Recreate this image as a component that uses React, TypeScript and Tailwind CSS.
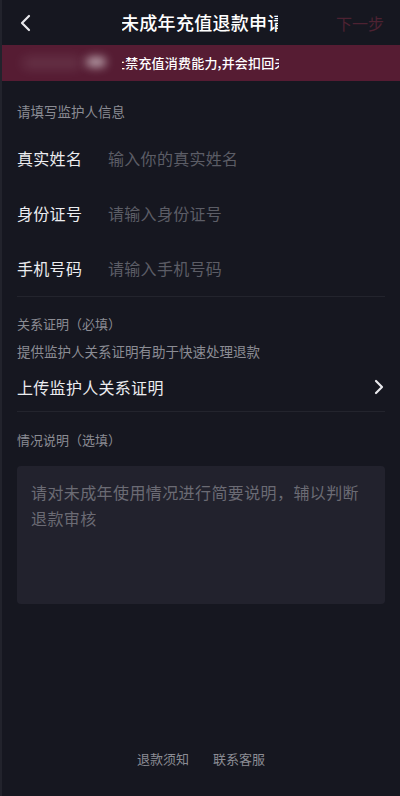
import React from "react";

const font = { fontFamily: '"Noto Sans CJK SC", "Noto Sans", sans-serif' };

function Row({ label, placeholder }: { label: string; placeholder: string }) {
  return (
    <div className="flex items-center h-[55px]">
      <span className="w-[91px] text-[16px] text-[#ecedf0] tracking-[0.3px]">{label}</span>
      <span className="text-[16px] text-[#5c5d66] tracking-[0.3px]">{placeholder}</span>
    </div>
  );
}

export default function App() {
  return (
    <div style={font} className="w-[400px] h-[796px] bg-[#161720] border-l-2 border-[#22232c] flex flex-col overflow-hidden">
      {/* header */}
      <div className="h-[45px] shrink-0 flex items-center relative">
        <div className="w-[120px] pl-[17px] flex items-center">
          <svg width="14" height="20" viewBox="0 0 14 20">
            <path d="M10 3 L3 10 L10 17" stroke="#e8e8ec" strokeWidth="2.2" fill="none" strokeLinecap="round" strokeLinejoin="round" />
          </svg>
        </div>
        <div className="w-[156px] overflow-hidden whitespace-nowrap">
          <span className="text-[18px] text-white font-medium block -ml-[1px] tracking-[0.3px]">未成年充值退款申请</span>
        </div>
        <div className="flex-1 flex justify-end pr-[16px]">
          <span className="text-[16px] text-[#4d2232]">下一步</span>
        </div>
      </div>
      {/* banner */}
      <div className="h-[36px] shrink-0 bg-[#561c33] flex items-center relative">
        <div className="absolute left-[84px] top-[12px] w-[20px] h-[10px] rounded-full bg-white/60 blur-[5px]" />
        <div className="absolute left-[20px] top-[12px] w-[60px] h-[12px] rounded-full bg-white/10 blur-[6px]" />
        <div className="ml-[120px] w-[157px] overflow-hidden whitespace-nowrap">
          <span className="block text-[13px] text-white font-medium -ml-[10px] tracking-[0.2px]">止禁充值消费能力,并会扣回未成年</span>
        </div>
      </div>
      {/* form */}
      <div className="px-[15px] flex flex-col">
        <div className="pt-[20px] text-[13.5px] text-[#8b8c94] h-[49px] leading-[20px]">请填写监护人信息</div>
        <Row label="真实姓名" placeholder="输入你的真实姓名" />
        <Row label="身份证号" placeholder="请输入身份证号" />
        <Row label="手机号码" placeholder="请输入手机号码" />
        <div className="h-px bg-[#23242d] mt-[1px]" />
        <div className="pt-[17px] text-[13px] text-[#8b8c94] leading-[20px]">关系证明（必填）</div>
        <div className="pt-[7px] text-[13.5px] text-[#8b8c94] leading-[20px]">提供监护人关系证明有助于快速处理退款</div>
        <div className="flex items-center justify-between h-[38px] mt-[7px]">
          <span className="text-[16px] text-[#ecedf0] tracking-[0.3px]">上传监护人关系证明</span>
          <svg width="12" height="18" viewBox="0 0 12 18">
            <path d="M3 3 L9 9 L3 15" stroke="#e8e8ec" strokeWidth="2.2" fill="none" strokeLinecap="round" strokeLinejoin="round" />
          </svg>
        </div>
        <div className="h-px bg-[#23242d] mt-[5px]" />
        <div className="pt-[18px] text-[13px] text-[#8b8c94] leading-[20px]">情况说明（选填）</div>
        <div className="mt-[16px] h-[138px] bg-[#22222d] rounded-[4px] pl-[14px] pr-[20px] pt-[13px]">
          <p className="text-[16px] text-[#6b6b74] leading-[26px] tracking-[0.4px]">请对未成年使用情况进行简要说明，辅以判断退款审核</p>
        </div>
      </div>
      <div className="flex-1" />
      <div className="flex justify-center gap-[24px] pb-[28px]">
        <span className="text-[13px] text-[#8b8c94]">退款须知</span>
        <span className="text-[13px] text-[#8b8c94]">联系客服</span>
      </div>
    </div>
  );
}
